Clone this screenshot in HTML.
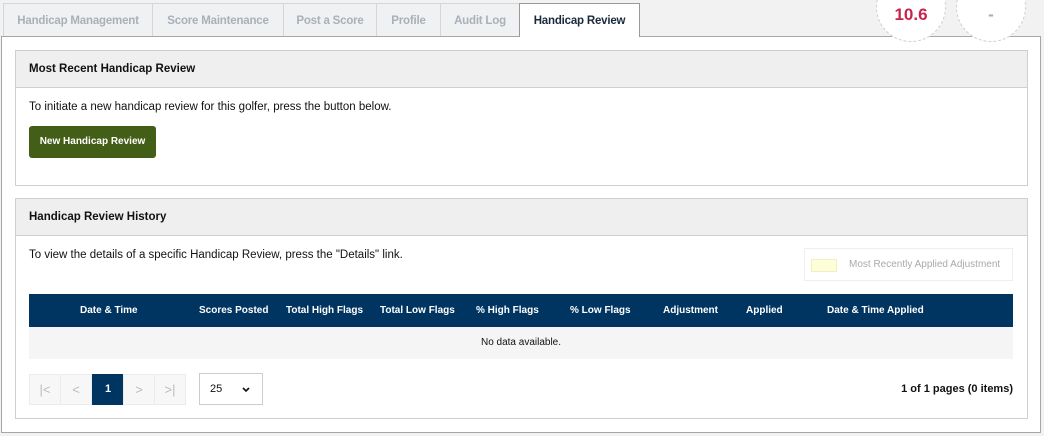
<!DOCTYPE html>
<html><head><style>
*{box-sizing:border-box;margin:0;padding:0}
body{width:1044px;height:436px;background:#f2f2f2;font-family:"Liberation Sans",sans-serif;position:relative;overflow:hidden;color:#111}
.a{position:absolute}
.tab{position:absolute;top:3px;height:33px;border:1px solid #d6d6d6;border-bottom:none;background:#f0f1f3;color:#a9b0b8;font-size:11.5px;font-weight:bold;line-height:34px;text-align:center;letter-spacing:-0.2px}
.tab.on{background:#fff;color:#1a2a3a;border-color:#999;height:34px;z-index:3}
.panel{position:absolute;left:1px;top:36px;width:1040px;height:397px;background:#fff;border:1px solid #a6a6a6}
.sec{position:absolute;left:15px;width:1013px;border:1px solid #cfcfcf;background:#fff}
.hd{height:37px;background:#efefef;border-bottom:1px solid #cfcfcf;font-size:11.5px;font-weight:bold;line-height:37px;padding-left:13px}
.txt{font-size:11.5px}
.circ{position:absolute;width:70px;height:70px;border-radius:50%;border:1px dashed #cfcfcf;background:#fff;text-align:center}
.pg{position:absolute;top:374px;width:32px;height:31px;border:1px solid #ececec;background:#f7f7f7;color:#bbb;font-size:13px;text-align:center;line-height:29px}
</style></head><body>
<div class="tab" style="left:3px;width:150px">Handicap Management</div>
<div class="tab" style="left:152px;width:132px">Score Maintenance</div>
<div class="tab" style="left:283px;width:94px">Post a Score</div>
<div class="tab" style="left:376px;width:65px">Profile</div>
<div class="tab" style="left:440px;width:80px">Audit Log</div>
<div class="tab on" style="left:519px;width:121px">Handicap Review</div>
<div class="panel"></div>
<div class="circ" style="left:876px;top:-28px;z-index:4"><div style="position:absolute;top:32px;width:100%;color:#c8234a;font-size:17px;font-weight:bold">10.6</div></div>
<div class="circ" style="left:956px;top:-28px;z-index:4"><div style="position:absolute;top:32px;width:100%;color:#aaa;font-size:17px;font-weight:bold">-</div></div>
<div class="sec" style="top:50px;height:136px">
<div class="hd">Most Recent Handicap Review</div>
<div class="a txt" style="left:13px;top:50px">To initiate a new handicap review for this golfer, press the button below.</div>
<div class="a" style="left:13px;top:75px;width:127px;height:32px;background:#435e17;border-radius:3px;color:#fff;font-size:10px;font-weight:bold;text-align:center;line-height:32px">New Handicap Review</div>
</div>
<div class="sec" style="top:198px;height:221px">
<div class="hd">Handicap Review History</div>
<div class="a txt" style="left:13px;top:50px">To view the details of a specific Handicap Review, press the "Details" link.</div>
<div class="a" style="left:788px;top:49px;width:209px;height:33px;border:1px solid #eee"><div class="a" style="left:6px;top:10px;width:26px;height:13px;background:#fdfdd8;border:1px solid #f0f0c8"></div><div class="a" style="left:44px;top:10px;font-size:10px;color:#aaa">Most Recently Applied Adjustment</div></div>
</div>
<div class="a" style="left:29px;top:294px;width:984px;height:33px;background:#013561"></div>
<div class="a" style="left:29px;top:327px;width:984px;height:32px;background:#f5f5f5;font-size:10px;text-align:center;line-height:32px">No data available.</div>
<div class="a" style="left:29px;top:294px;width:984px;height:33px;font-size:10px;font-weight:bold;color:#fff;line-height:33px">
<span class="a" style="left:51px">Date &amp; Time</span>
<span class="a" style="left:170px">Scores Posted</span>
<span class="a" style="left:257px">Total High Flags</span>
<span class="a" style="left:351px">Total Low Flags</span>
<span class="a" style="left:447px">% High Flags</span>
<span class="a" style="left:541px">% Low Flags</span>
<span class="a" style="left:634px">Adjustment</span>
<span class="a" style="left:717px">Applied</span>
<span class="a" style="left:798px">Date &amp; Time Applied</span>
</div>
<div class="pg" style="left:29px">|&lt;</div>
<div class="pg" style="left:60px">&lt;</div>
<div class="pg" style="left:92px;background:#013561;color:#fff;border-color:#013561;font-weight:bold;font-size:11px">1</div>
<div class="pg" style="left:123px">&gt;</div>
<div class="pg" style="left:154px">&gt;|</div>
<div class="a" style="left:199px;top:373px;width:64px;height:32px;border:1px solid #ccc;font-size:11px;line-height:30px;padding-left:10px">25<svg class="a" style="left:42px;top:13px" width="8" height="6" viewBox="0 0 8 6"><path d="M1 1L4 4L7 1" stroke="#111" stroke-width="1.6" fill="none"/></svg></div>
<div class="a" style="right:31px;top:383px;font-size:11px;font-weight:bold">1 of 1 pages (0 items)</div>
</body></html>
